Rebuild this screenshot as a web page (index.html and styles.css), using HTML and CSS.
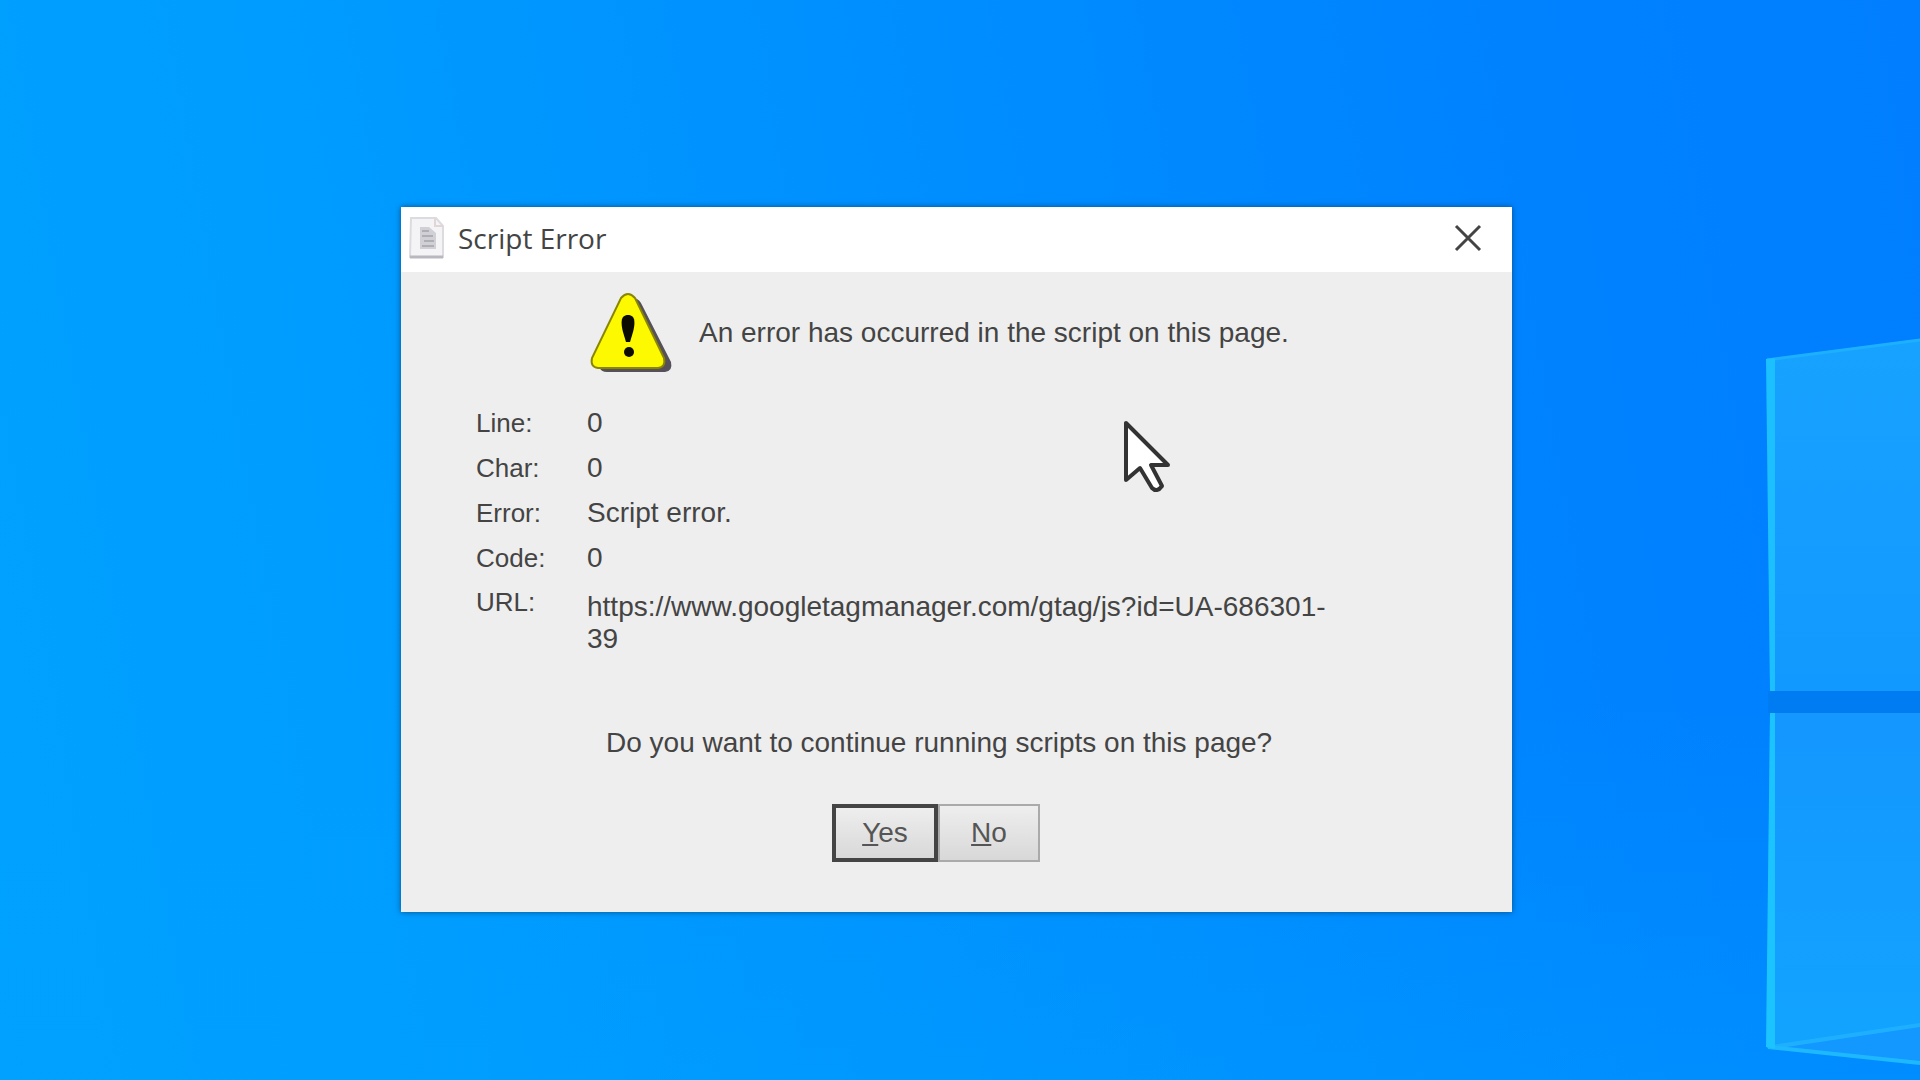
FILE: index.html
```html
<!DOCTYPE html>
<html lang="en">
<head>
  <meta charset="utf-8">
  <title>Script Error</title>
  <link rel="stylesheet" href="styles.css">
</head>
<body>
  <div class="desktop">
    <svg class="windows-logo" width="160" height="740" viewBox="0 0 160 740" aria-hidden="true">
      <defs>
        <linearGradient id="paneTop" x1="0" y1="0" x2="0" y2="1">
          <stop offset="0" stop-color="#18a2ff"/>
          <stop offset="1" stop-color="#1299ff"/>
        </linearGradient>
        <linearGradient id="paneBottom" x1="0" y1="0" x2="0" y2="1">
          <stop offset="0" stop-color="#1497ff"/>
          <stop offset="1" stop-color="#12a4ff"/>
        </linearGradient>
      </defs>
      <path d="M8 357 H160 V379 H8 Z" fill="#007cf2"/>
      <!-- upper pane -->
      <path d="M7 25 L160 5 V357 H10 Z" fill="url(#paneTop)"/>
      <path d="M7 26 L160 6" stroke="#1cb0ff" stroke-width="3"/>
      <path d="M6 25 L15 24 V357 H10 Z" fill="#1cc0ff"/>
      <!-- lower pane -->
      <path d="M10 379 H160 V729 L7 714 Z" fill="url(#paneBottom)"/>
      <path d="M12 713 L160 691 V729 Z" fill="#1298ff"/>
      <path d="M12 713 L160 691" stroke="#1eb0ff" stroke-width="4"/>
      <path d="M8 713 L160 729" stroke="#1eb8ff" stroke-width="4"/>
      <path d="M10 379 H15 V715 L6 713 Z" fill="#1cc4ff"/>
    </svg>

    <div class="dialog" role="dialog" aria-labelledby="dialogTitle">
      <div class="title-bar">
        <svg class="title-icon" width="36" height="44" viewBox="0 0 36 44" aria-hidden="true">
          <path d="M2 2 H27 L34 10 V41 H1 Z" fill="#f4f3f5" stroke="#dddbe0" stroke-width="2"/>
          <path d="M26 2 V10 H34" fill="none" stroke="#e2d5d6" stroke-width="2"/>
          <path d="M1 41 H34" stroke="#b9b8be" stroke-width="3"/>
          <path d="M11 11 H20 L27 17 V33 H11 Z" fill="#d0d0d5"/>
          <path d="M13 15 H20 M13 20 H24 M15 25 H25 M13 30 H25" stroke="#aeaeb6" stroke-width="2"/>
        </svg>
        <h1 class="title" id="dialogTitle">Script Error</h1>
        <button class="close" aria-label="Close">
          <svg width="28" height="28" viewBox="0 0 28 28" aria-hidden="true">
            <path d="M2 2 L26 26 M26 2 L2 26" stroke="#444" stroke-width="3"/>
          </svg>
        </button>
      </div>

      <div class="content">
        <div class="message">
          <svg width="84" height="82" viewBox="0 0 84 82" aria-hidden="true">
            <path d="M46 6 Q51 8 53 13 L82 70 Q84 79 76 80 H18 Q12 80 10 75 Z" fill="#55505a"/>
            <path d="M32 6 Q39 -2 46 6 L75 66 Q77 75 69 76 H9 Q1 75 3 66 Z" fill="#fdf900" stroke="#8a8600" stroke-width="2"/>
            <path d="M39 23 C47 23 46 32 44 40 L41 50 H37 L34 40 C32 32 31 23 39 23 Z" fill="#0c0c00"/>
            <circle cx="40" cy="60" r="5" fill="#0c0c00"/>
          </svg>
          <p>An error has occurred in the script on this page.</p>
        </div>

        <table class="details">
          <tr><th scope="row">Line:</th><td>0</td></tr>
          <tr><th scope="row">Char:</th><td>0</td></tr>
          <tr><th scope="row">Error:</th><td>Script error.</td></tr>
          <tr><th scope="row">Code:</th><td>0</td></tr>
          <tr class="url"><th scope="row">URL:</th><td>https://www.googletagmanager.com/gtag/js?id=UA-686301-<br>39</td></tr>
        </table>

        <p class="question">Do you want to continue running scripts on this page?</p>

        <div class="buttons">
          <button class="button default"><u>Y</u>es</button>
          <button class="button"><u>N</u>o</button>
        </div>
      </div>
    </div>

    <svg class="cursor" width="50" height="76" viewBox="0 0 50 76" aria-hidden="true">
      <path d="M3 3 V60 L17 48 L29 68 Q34 73 39 66 L28 45 H45 Z" fill="#fff" stroke="#333" stroke-width="4" stroke-linejoin="round"/>
    </svg>
  </div>
</body>
</html>
```
FILE: styles.css
```css
body {
  margin: 0;
  font-family: "Liberation Sans", Arial, sans-serif;
  font-size: 28px;
  line-height: 32px;
  color: #444;
}

.desktop {
  position: relative;
  min-height: 100vh;
  overflow: hidden;
  background:
    linear-gradient(to bottom, transparent 65%, rgba(0, 160, 255, 0.4) 100%),
    linear-gradient(80deg, #00a2ff 0%, #009cff 22%, #008fff 50%, #0082ff 80%, #007eff 100%);
}

.windows-logo {
  position: absolute;
  top: 334px;
  right: 0;
}

.dialog {
  position: absolute;
  top: 207px;
  left: 401px;
  right: 408px;
  background-color: #eee;
  box-shadow: 0 0 6px #04508c;
}

.title-bar {
  display: flex;
  align-items: center;
  height: 62px;
  padding: 0 30px 3px 8px;
  background-color: #fff;
}

.title {
  flex: 1;
  margin: 0 0 0 13px;
  font-family: "Open Sans", sans-serif;
  font-size: 28px;
  font-weight: normal;
}

.close {
  display: flex;
  padding: 0;
  border: none;
  background: none;
}

.content {
  padding: 20px 75px 50px;
}

.message {
  display: flex;
  align-items: center;
  gap: 26px;
  padding-left: 113px;
}

.message p {
  margin: 0;
}

.details {
  margin-top: 26px;
  border-collapse: collapse;
}

.details th,
.details td {
  height: 45px;
  padding: 0;
  text-align: left;
  font-weight: normal;
}

.details th {
  width: 111px;
  font-size: 26px;
}

.details .url th,
.details .url td {
  padding-top: 6px;
  vertical-align: top;
}

.details .url td {
  padding-top: 11px;
}

.question {
  margin: 72px 0 45px;
  padding-left: 130px;
}

.buttons {
  display: flex;
  padding-left: 356px;
}

.button {
  width: 102px;
  height: 58px;
  padding: 0;
  border: 2px solid #aaa;
  background: linear-gradient(#eee, #d8d8d8);
  font-family: inherit;
  font-size: 28px;
  color: #555;
}

.default {
  width: 106px;
  border: 4px solid #444;
}

.cursor {
  position: absolute;
  top: 420px;
  left: 1123px;
}
```
